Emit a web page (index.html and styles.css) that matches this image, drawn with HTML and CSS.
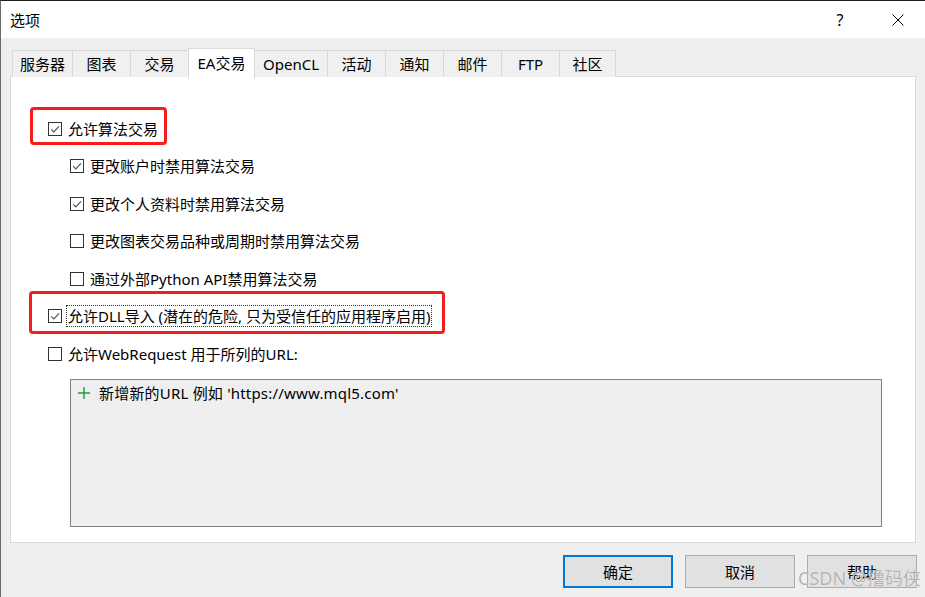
FILE: index.html
```html
<!DOCTYPE html>
<html lang="zh-CN">
<head>
    <meta charset="UTF-8">
    <title>选项</title>
    <link rel="stylesheet" href="styles.css">
</head>
<body>
<div class="dialog">
    <header class="titlebar">
        <span class="title">选项</span>
        <div class="title-buttons">
            <span class="help-btn">?</span>
            <span class="close-btn">
                <svg width="12" height="12" viewBox="0 0 12 12"><path d="M0.5 0.5 L11.5 11.5 M11.5 0.5 L0.5 11.5" stroke="#000" stroke-width="1"/></svg>
            </span>
        </div>
    </header>

    <div class="body">
        <div class="tabs">
            <div class="tab w60">服务器</div>
            <div class="tab">图表</div>
            <div class="tab">交易</div>
            <div class="tab active">EA交易</div>
            <div class="tab w72">OpenCL</div>
            <div class="tab">活动</div>
            <div class="tab">通知</div>
            <div class="tab">邮件</div>
            <div class="tab">FTP</div>
            <div class="tab w57">社区</div>
        </div>

        <div class="panel">
            <div class="row">
                <svg class="box" viewBox="0 0 14 14"><rect x="0.5" y="0.5" width="13" height="13" fill="#fff" stroke="#333"/><path d="M3.2 7.3 L5.8 9.9 L11 4.4" fill="none" stroke="#555" stroke-width="1.2"/></svg>
                <span>允许算法交易</span>
                <div class="mark mark-algo"></div>
            </div>
            <div class="row sub">
                <svg class="box" viewBox="0 0 14 14"><rect x="0.5" y="0.5" width="13" height="13" fill="#fff" stroke="#333"/><path d="M3.2 7.3 L5.8 9.9 L11 4.4" fill="none" stroke="#555" stroke-width="1.2"/></svg>
                <span>更改账户时禁用算法交易</span>
            </div>
            <div class="row sub">
                <svg class="box" viewBox="0 0 14 14"><rect x="0.5" y="0.5" width="13" height="13" fill="#fff" stroke="#333"/><path d="M3.2 7.3 L5.8 9.9 L11 4.4" fill="none" stroke="#555" stroke-width="1.2"/></svg>
                <span>更改个人资料时禁用算法交易</span>
            </div>
            <div class="row sub">
                <svg class="box" viewBox="0 0 14 14"><rect x="0.5" y="0.5" width="13" height="13" fill="#fff" stroke="#333"/></svg>
                <span>更改图表交易品种或周期时禁用算法交易</span>
            </div>
            <div class="row sub">
                <svg class="box" viewBox="0 0 14 14"><rect x="0.5" y="0.5" width="13" height="13" fill="#fff" stroke="#333"/></svg>
                <span>通过外部Python API禁用算法交易</span>
            </div>
            <div class="row">
                <svg class="box" viewBox="0 0 14 14"><rect x="0.5" y="0.5" width="13" height="13" fill="#fff" stroke="#333"/><path d="M3.2 7.3 L5.8 9.9 L11 4.4" fill="none" stroke="#555" stroke-width="1.2"/></svg>
                <span class="focus">允许DLL导入 (潜在的危险, 只为受信任的应用程序启用)</span>
                <div class="mark mark-dll"></div>
            </div>
            <div class="row">
                <svg class="box" viewBox="0 0 14 14"><rect x="0.5" y="0.5" width="13" height="13" fill="#fff" stroke="#333"/></svg>
                <span>允许WebRequest 用于所列的URL:</span>
            </div>

            <div class="url-list">
                <div class="url-item">
                    <svg width="12" height="12" viewBox="0 0 12 12"><path d="M6 0 V12 M0 6 H12" stroke="#1e9e3a" stroke-width="1.4"/></svg>
                    <span>新增新的URL 例如 'https://www.mql5.com'</span>
                </div>
            </div>
        </div>

        <footer class="footer">
            <button class="btn default">确定</button>
            <button class="btn">取消</button>
            <button class="btn">帮助</button>
            <span class="watermark">CSDN @撸码侠</span>
        </footer>
    </div>
</div>
</body>
</html>
```

FILE: styles.css
```css
* {
    box-sizing: border-box;
}

body {
    margin: 0;
    font-family: "Noto Sans", "Noto Sans CJK SC", sans-serif;
    font-size: 15px;
    color: #000;
    background-color: #efefef;
}

.dialog {
    width: 925px;
    height: 597px;
    border-top: 1px solid #1e1e1e;
    border-left: 1px solid #6a6a6a;
    background-color: #efefef;
    position: relative;
    overflow: hidden;
}

/* Title bar */
.titlebar {
    height: 37px;
    background-color: #fff;
    display: flex;
    align-items: center;
    justify-content: space-between;
    padding-left: 9px;
}

.title {
    line-height: 20px;
}

.title-buttons {
    display: flex;
    align-items: center;
}

.help-btn {
    width: 46px;
    text-align: center;
    font-size: 16px;
    margin-right: 12px;
}

.close-btn {
    width: 46px;
    height: 37px;
    display: flex;
    align-items: center;
    justify-content: center;
    margin-right: 4px;
}

/* Tabs */
.body {
    padding: 12px 9px 0 9px;
}

.tabs {
    display: flex;
    padding-left: 2px;
    height: 27px;
    position: relative;
    z-index: 2;
}

.tab {
    width: 58px;
    height: 27px;
    border-top: 1px solid #d9d9d9;
    border-left: 1px solid #d9d9d9;
    background-color: #f0f0f0;
    display: flex;
    align-items: center;
    justify-content: center;
    line-height: 20px;
    white-space: nowrap;
}

.tab:last-child {
    border-right: 1px solid #d9d9d9;
}

.tab.w60 { width: 60px; }
.tab.w72 { width: 73px; }
.tab.w57 { width: 57px; }

.tab.active {
    width: 67px;
    height: 31px;
    margin-top: -2px;
    border-right: 1px solid #d9d9d9;
    margin-right: -1px;
    background-color: #fff;
    padding-bottom: 3px;
    position: relative;
    z-index: 1;
}

/* Panel */
.panel {
    height: 467px;
    background-color: #fff;
    border: 1px solid #d9d9d9;
    margin-top: -1px;
    padding-top: 33px;
    position: relative;
    z-index: 1;
}

.row {
    height: 37.5px;
    display: flex;
    align-items: center;
    gap: 6px;
    padding-left: 37px;
    line-height: 20px;
    white-space: nowrap;
    position: relative;
}

.row.sub {
    padding-left: 59px;
}

.box {
    width: 14px;
    height: 14px;
    flex: none;
}

.focus {
    outline: 1px dotted #333;
    outline-offset: 0;
    margin-left: -1px;
    padding-left: 1px;
}

/* red annotation frames */
.mark {
    position: absolute;
    border: 3px solid #f21d1d;
    border-radius: 4px;
    pointer-events: none;
}

.mark-algo {
    left: 19px;
    top: -3px;
    width: 137px;
    height: 38px;
}

.mark-dll {
    left: 18px;
    top: -7px;
    width: 416px;
    height: 43px;
}

/* URL list */
.url-list {
    margin: 6px 0 0 59px;
    width: 812px;
    height: 148px;
    border: 1px solid #7f8087;
    background-color: #efefef;
    padding: 3px 0 0 7px;
}

.url-item {
    display: flex;
    align-items: center;
    gap: 9px;
    line-height: 20px;
}

.url-item span {
    letter-spacing: 0.2px;
}

/* Footer buttons */
.footer {
    display: flex;
    justify-content: flex-end;
    gap: 12px;
    padding-top: 12px;
    margin-right: -1px;
    position: relative;
}

.btn {
    width: 110px;
    height: 33px;
    font-family: inherit;
    font-size: 15px;
    background-color: #e1e1e1;
    border: 1px solid #adadad;
    color: #000;
    padding: 0;
}

.btn.default {
    border: 2px solid #0078d7;
}

.watermark {
    position: absolute;
    right: -4px;
    top: 21px;
    font-size: 18px;
    color: rgba(165, 165, 165, 0.85);
    text-shadow: 0 0 1px #fff;
    pointer-events: none;
    white-space: nowrap;
}
```
